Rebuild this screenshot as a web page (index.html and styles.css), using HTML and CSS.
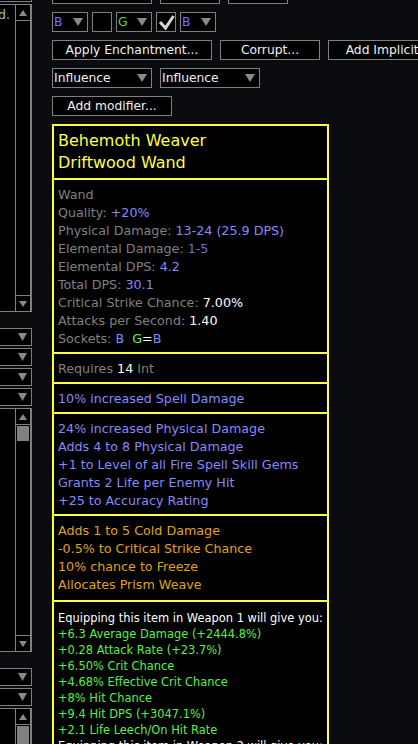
FILE: index.html
```html
<!DOCTYPE html>
<html>
<head>
<meta charset="utf-8">
<link rel="stylesheet" href="styles.css">
</head>
<body>
<div class="app">
  <aside class="side">
    <div class="stub"></div>
    <div class="list list-a">
      <div class="list-body"><span class="cut">d.</span></div>
      <div class="sb">
        <div class="sb-btn sb-up"><svg class="stri" width="8" height="6" viewBox="0 0 8 6"><path d="M0 6H8L4 0Z"/></svg></div>
        <div class="sb-btn sb-down"><svg class="stri" width="8" height="6" viewBox="0 0 8 6"><path d="M0 0H8L4 6Z"/></svg></div>
      </div>
    </div>
    <div class="sdds">
      <div class="sdd"><svg class="tri" width="9" height="8" viewBox="0 0 9 8"><path d="M0 0H9L4.5 8Z"/></svg></div>
      <div class="sdd"><svg class="tri" width="9" height="8" viewBox="0 0 9 8"><path d="M0 0H9L4.5 8Z"/></svg></div>
      <div class="sdd"><svg class="tri" width="9" height="8" viewBox="0 0 9 8"><path d="M0 0H9L4.5 8Z"/></svg></div>
      <div class="sdd"><svg class="tri" width="9" height="8" viewBox="0 0 9 8"><path d="M0 0H9L4.5 8Z"/></svg></div>
    </div>
    <div class="list list-b">
      <div class="list-body"></div>
      <div class="sb">
        <div class="sb-btn sb-up"><svg class="stri" width="8" height="6" viewBox="0 0 8 6"><path d="M0 6H8L4 0Z"/></svg></div>
        <div class="thumb"></div>
        <div class="sb-btn sb-down"><svg class="stri" width="8" height="6" viewBox="0 0 8 6"><path d="M0 0H8L4 6Z"/></svg></div>
      </div>
    </div>
    <div class="sdds">
      <div class="sdd"><svg class="tri" width="9" height="8" viewBox="0 0 9 8"><path d="M0 0H9L4.5 8Z"/></svg></div>
      <div class="sdd"><svg class="tri" width="9" height="8" viewBox="0 0 9 8"><path d="M0 0H9L4.5 8Z"/></svg></div>
    </div>
    <div class="list list-c">
      <div class="list-body"></div>
      <div class="sb">
        <div class="sb-btn sb-up"><svg class="stri" width="8" height="6" viewBox="0 0 8 6"><path d="M0 6H8L4 0Z"/></svg></div>
        <div class="thumb thumb-long"></div>
      </div>
    </div>
  </aside>

  <main class="main">
    <div class="row row-top">
      <div class="ctl btn w100"></div>
      <div class="ctl btn w60"></div>
      <div class="ctl btn w60"></div>
    </div>
    <div class="row row-sock">
      <div class="ctl dd w36"><span class="s-blue">B</span><svg class="tri" width="10" height="8" viewBox="0 0 10 8"><path d="M0 0H10L5 8Z"/></svg></div>
      <div class="ctl w20"></div>
      <div class="ctl dd w36"><span class="s-green">G</span><svg class="tri" width="10" height="8" viewBox="0 0 10 8"><path d="M0 0H10L5 8Z"/></svg></div>
      <div class="ctl w20 check"><svg width="18" height="18" viewBox="0 0 18 18"><path d="M3 9L8.5 15L16.5 3" fill="none" stroke="#d6d6d6" stroke-width="3"/></svg></div>
      <div class="ctl dd w36"><span class="s-blue">B</span><svg class="tri" width="10" height="8" viewBox="0 0 10 8"><path d="M0 0H10L5 8Z"/></svg></div>
    </div>
    <div class="row">
      <div class="ctl btn w160">Apply Enchantment...</div>
      <div class="ctl btn w100">Corrupt...</div>
      <div class="ctl btn w120">Add Implicit...</div>
    </div>
    <div class="row">
      <div class="ctl dd w100"><span>Influence</span><svg class="tri" width="10" height="8" viewBox="0 0 10 8"><path d="M0 0H10L5 8Z"/></svg></div>
      <div class="ctl dd w100"><span>Influence</span><svg class="tri" width="10" height="8" viewBox="0 0 10 8"><path d="M0 0H10L5 8Z"/></svg></div>
    </div>
    <div class="row">
      <div class="ctl btn w120">Add modifier...</div>
    </div>

    <div class="item">
      <div class="sec sec-title">
        <div>Behemoth Weaver</div>
        <div>Driftwood Wand</div>
      </div>
      <div class="sec">
        <div>Wand</div>
        <div>Quality: <span class="v">+20%</span></div>
        <div>Physical Damage: <span class="v">13-24 (25.9 DPS)</span></div>
        <div>Elemental Damage: <span class="cold">1-5</span></div>
        <div>Elemental DPS: <span class="v">4.2</span></div>
        <div>Total DPS: <span class="v">30.1</span></div>
        <div>Critical Strike Chance: <span class="wt">7.00%</span></div>
        <div>Attacks per Second: <span class="wt">1.40</span></div>
        <div>Sockets: <span class="v">B</span>  <span class="grn">G</span><span class="wt">=</span><span class="v">B</span></div>
      </div>
      <div class="sec">
        <div>Requires <span class="wt">14</span> Int</div>
      </div>
      <div class="sec v">
        <div>10% increased Spell Damage</div>
      </div>
      <div class="sec v">
        <div>24% increased Physical Damage</div>
        <div>Adds 4 to 8 Physical Damage</div>
        <div>+1 to Level of all Fire Spell Skill Gems</div>
        <div>Grants 2 Life per Enemy Hit</div>
        <div>+25 to Accuracy Rating</div>
      </div>
      <div class="sec sec-craft">
        <div>Adds 1 to 5 Cold Damage</div>
        <div>-0.5% to Critical Strike Chance</div>
        <div>10% chance to Freeze</div>
        <div>Allocates Prism Weave</div>
      </div>
      <div class="sec sec-cmp">
        <div class="wt">Equipping this item in Weapon 1 will give you:</div>
        <div class="pos">+6.3 Average Damage (+2444.8%)</div>
        <div class="pos">+0.28 Attack Rate (+23.7%)</div>
        <div class="pos">+6.50% Crit Chance</div>
        <div class="pos">+4.68% Effective Crit Chance</div>
        <div class="pos">+8% Hit Chance</div>
        <div class="pos">+9.4 Hit DPS (+3047.1%)</div>
        <div class="pos">+2.1 Life Leech/On Hit Rate</div>
        <div class="wt">Equipping this item in Weapon 2 will give you:</div>
      </div>
    </div>
  </main>
</div>
</body>
</html>
```

FILE: styles.css
```css
* { box-sizing: border-box; }

html, body {
  margin: 0;
  padding: 0;
  overflow: hidden;
  background: #0b0c0f;
}

body {
  width: 418px;
  height: 744px;
  font-family: "DejaVu Sans", sans-serif;
}

.app {
  display: flex;
  gap: 20px;
  align-items: flex-start;
}

/* ---------- left column ---------- */
.side {
  width: 32px;
  flex: none;
  display: flex;
  flex-direction: column;
}

.stub {
  margin-left: -1px;
  width: 33px;
  height: 2px;
  border: 1px solid #808080;
  border-top: none;
  background: #000;
}

.list {
  margin-left: -1px;
  margin-top: 2px;
  width: 33px;
  border: 1px solid #808080;
  background: #000;
  display: flex;
}

.list-a { height: 308px; }
.list-b { height: 244px; }
.list-c { height: 60px; }

.list-body {
  flex: 1;
  overflow: hidden;
  padding-top: 1px;
  font-size: 12.6px;
  line-height: 18px;
  color: #b4b4b4;
  white-space: nowrap;
}

.cut { margin-left: -2px; }

.sb {
  width: 16px;
  flex: none;
  border-left: 1px solid #808080;
  border-right: 1px solid #808080;
  display: flex;
  flex-direction: column;
}

.sb-btn {
  height: 16px;
  flex: none;
  display: flex;
  align-items: center;
  justify-content: center;
}

.sb-up { border-bottom: 1px solid #808080; }

.sb-down {
  border-top: 1px solid #808080;
  margin-top: auto;
}

.stri { fill: #8a8a8a; display: block; }

.thumb {
  margin: 1px 1px 0;
  height: 15px;
  background: #808080;
  flex: none;
}

.thumb-long { height: 40px; }

.sdds {
  margin-top: 16px;
  display: flex;
  flex-direction: column;
  gap: 2px;
}

.sdd {
  margin-left: -1px;
  width: 33px;
  height: 18px;
  border: 1px solid #808080;
  background: #000;
  display: flex;
  align-items: center;
  justify-content: flex-end;
  padding-right: 4px;
}

.tri { fill: #8a8a8a; display: block; flex: none; }

/* ---------- main column ---------- */
.main {
  flex: none;
  width: 366px;
  display: flex;
  flex-direction: column;
  gap: 8px;
}

.row {
  display: flex;
  gap: 8px;
  height: 20px;
}

.row-top { margin-top: -16px; }
.row-sock { gap: 4px; }

.ctl {
  flex: none;
  height: 20px;
  border: 1px solid #808080;
  background: #000;
  color: #f0f0f0;
  font-size: 12.3px;
  line-height: 18px;
  white-space: nowrap;
}

.btn {
  display: flex;
  align-items: center;
  justify-content: center;
}

.dd {
  display: flex;
  align-items: center;
  justify-content: space-between;
  padding: 0 4px 0 1px;
}

.check {
  display: flex;
  align-items: center;
  justify-content: center;
}

.check svg { display: block; }

.w20 { width: 20px; }
.w36 { width: 36px; }
.w60 { width: 60px; }
.w100 { width: 100px; }
.w120 { width: 120px; }
.w160 { width: 160px; }

.s-blue { color: #7c6cff; }
.s-green { color: #5ed62a; }

/* ---------- item tooltip ---------- */
.item {
  width: 277px;
  flex: none;
  border: 2px solid #ffff44;
  background: #000;
  color: #808080;
  font-size: 12.7px;
  line-height: 18px;
}

.sec { padding: 6px 4px 4px; }
.sec + .sec { border-top: 2px solid #ffff44; }
.sec > div { white-space: pre; }

.sec-title {
  color: #ffff44;
  font-size: 16px;
  line-height: 22px;
  padding: 4px 4px 4px;
}

.sec-craft {
  color: #e0a314;
  padding-bottom: 6px;
}

.sec-cmp {
  font-size: 11.45px;
  line-height: 16px;
  padding-top: 8px;
}

.v { color: #8888ff; }
.cold { color: #6a72d8; }
.wt { color: #ffffff; }
.grn { color: #66ff33; }
.pos { color: #5cee4c; }
```
